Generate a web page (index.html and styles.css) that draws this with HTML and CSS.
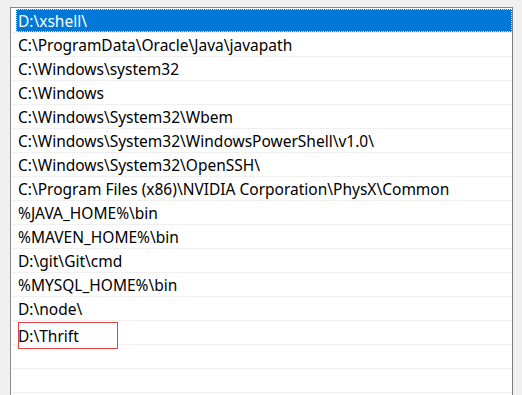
FILE: index.html
```html
<!DOCTYPE html>
<html>
<head>
<meta charset="utf-8">
<link rel="stylesheet" href="styles.css">
</head>
<body>
<div class="listbox">
  <div class="row selected"><span class="label">D:\xshell\</span></div>
  <div class="row"><span class="label">C:\ProgramData\Oracle\Java\javapath</span></div>
  <div class="row"><span class="label">C:\Windows\system32</span></div>
  <div class="row"><span class="label">C:\Windows</span></div>
  <div class="row"><span class="label">C:\Windows\System32\Wbem</span></div>
  <div class="row"><span class="label">C:\Windows\System32\WindowsPowerShell\v1.0\</span></div>
  <div class="row"><span class="label">C:\Windows\System32\OpenSSH\</span></div>
  <div class="row"><span class="label">C:\Program Files (x86)\NVIDIA Corporation\PhysX\Common</span></div>
  <div class="row"><span class="label">%JAVA_HOME%\bin</span></div>
  <div class="row"><span class="label">%MAVEN_HOME%\bin</span></div>
  <div class="row"><span class="label">D:\git\Git\cmd</span></div>
  <div class="row"><span class="label">%MYSQL_HOME%\bin</span></div>
  <div class="row"><span class="label">D:\node\</span></div>
  <div class="row editing"><div class="editbox">D:\Thrift</div></div>
  <div class="row"></div>
  <div class="row"></div>
</div>
</body>
</html>
```

FILE: styles.css
```css
html, body {
  margin: 0;
  padding: 0;
  background: #f0f0f0;
  overflow: hidden;
  height: 100%;
}
body {
  font-family: "Noto Sans", "Liberation Sans", sans-serif;
  font-size: 15.5px;
  color: #000;
}
.listbox {
  margin: 7px 0 0 10px;
  width: 501px;
  height: 387px;
  overflow: hidden;
  background: #fff;
  border: 1px solid #8a8a92;
  border-right-color: #7d7d7d;
  border-top-color: #868690;
  border-bottom: none;
  padding-top: 1px;
}
.row {
  position: relative;
  height: 23px;
  margin-left: 1px;
  border-bottom: 1px solid #f0f0f0;
  white-space: nowrap;
}
.label {
  display: block;
  height: 22px;
  line-height: 22px;
  padding-top: 1px;
  padding-left: 6px;
}
.selected .label {
  margin-left: 4px;
  padding-left: 2px;
  background: #0078d7;
  color: #fff;
  outline: 1px dotted #cfe3f5;
  outline-offset: -1px;
}
.editbox {
  position: absolute;
  left: 6px;
  top: 1px;
  width: 98px;
  height: 25px;
  line-height: 26px;
  border: 1px solid #e04444;
  text-indent: -1px;
  background: #fff;
}
```
